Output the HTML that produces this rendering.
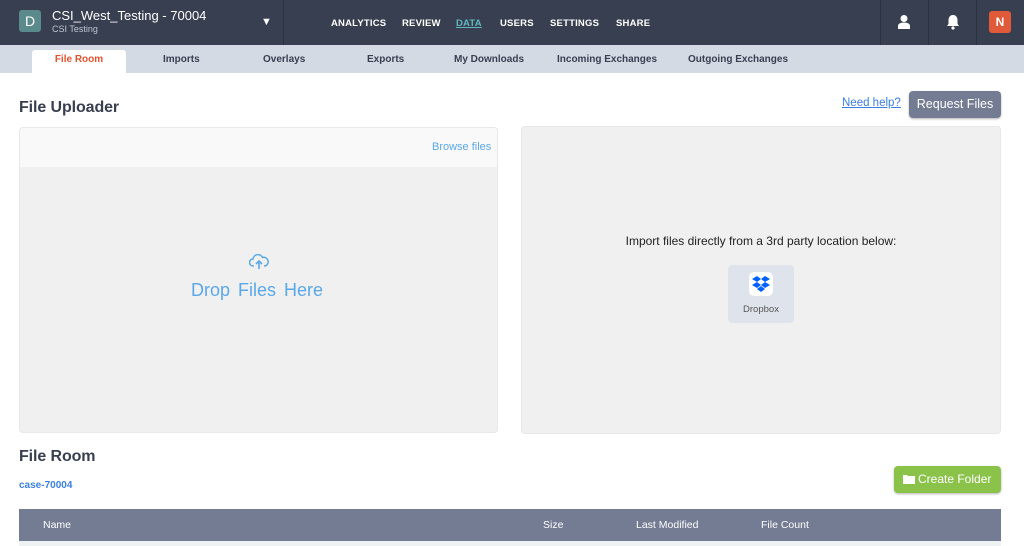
<!DOCTYPE html>
<html><head><meta charset="utf-8"><style>
*{margin:0;padding:0;box-sizing:border-box}
body{width:1024px;height:546px;overflow:hidden;background:#fff;font-family:"Liberation Sans",Arial,sans-serif;position:relative;color:#373f51}
.a{position:absolute}
.hdr{left:0;top:0;width:1024px;height:45px;background:#373f51}
.nav{font-size:9.5px;font-weight:bold;color:#fff;top:18px;letter-spacing:.2px}
.vd{top:0;width:1px;height:45px;background:#2a3140}
.tabs{left:0;top:45px;width:1024px;height:28px;background:#d3dae3}
.tab{top:54px;font-size:10px;font-weight:bold;color:#373f51;text-align:center}
</style></head><body>
<div class="a hdr"></div>
<div class="a" style="left:19px;top:10px;width:22px;height:22px;background:#5a8a8c;border-radius:3px;color:#fff;font-size:14px;text-align:center;line-height:22px">D</div>
<div class="a" style="left:52px;top:8px;color:#fff;font-size:13px">CSI_West_Testing - 70004</div>
<div class="a" style="left:52px;top:24px;color:#c0c6d0;font-size:9px">CSI Testing</div>
<div class="a" style="left:261px;top:16px;color:#fff;font-size:11px">▼</div>
<div class="a vd" style="left:283px"></div>
<div class="a nav" style="left:331px">ANALYTICS</div>
<div class="a nav" style="left:402px">REVIEW</div>
<div class="a nav" style="left:456px;color:#5fb8c0;text-decoration:underline">DATA</div>
<div class="a nav" style="left:500px">USERS</div>
<div class="a nav" style="left:550px">SETTINGS</div>
<div class="a nav" style="left:616px">SHARE</div>
<div class="a vd" style="left:880px"></div>
<div class="a vd" style="left:928px"></div>
<div class="a vd" style="left:976px"></div>
<svg class="a" style="left:897px;top:14px" width="14" height="15" viewBox="0 0 14 15"><circle cx="7" cy="4.5" r="3.5" fill="#fff"/><path d="M1 15v-3c0-2 2-3.5 6-3.5s6 1.5 6 3.5v3z" fill="#fff"/></svg>
<svg class="a" style="left:946px;top:14px" width="14" height="16" viewBox="0 0 14 16"><path d="M7 1c-3 0-4.5 2.5-4.5 5v4L1 12h12l-1.5-2V6C11.5 3.5 10 1 7 1z" fill="#fff"/><circle cx="7" cy="14" r="1.6" fill="#fff"/></svg>
<div class="a" style="left:989px;top:11px;width:22px;height:22px;background:#e05a3a;border-radius:3px;color:#fff;font-size:12px;font-weight:bold;text-align:center;line-height:22px">N</div>
<div class="a tabs"></div>
<div class="a" style="left:32px;top:50px;width:94px;height:23px;background:#fff;border-radius:3px 3px 0 0"></div>
<div class="a tab" style="left:32px;width:94px;color:#e0532f">File Room</div>
<div class="a tab" style="left:163px">Imports</div>
<div class="a tab" style="left:263px">Overlays</div>
<div class="a tab" style="left:367px">Exports</div>
<div class="a tab" style="left:454px">My Downloads</div>
<div class="a tab" style="left:557px">Incoming Exchanges</div>
<div class="a tab" style="left:688px">Outgoing Exchanges</div>
<div class="a" style="left:19px;top:99px;font-size:16px;font-weight:bold;letter-spacing:-.1px">File Uploader</div>
<div class="a" style="left:842px;top:97px;font-size:11.5px;color:#3b7fe0;text-decoration:underline">Need help?</div>
<div class="a" style="left:909px;top:91px;width:92px;height:27px;background:#737c93;border-radius:4px;color:#fff;font-size:12.5px;text-align:center;line-height:27px;box-shadow:0 1px 2px rgba(0,0,0,.3)">Request Files</div>
<div class="a" style="left:19px;top:127px;width:479px;height:306px;background:#f0f0f0;border:1px solid #e8e8e8;border-radius:4px;overflow:hidden"><div style="height:39px;background:#f9f9f9"></div></div>
<div class="a" style="left:432px;top:141px;font-size:11px;color:#5aa8ea">Browse files</div>
<svg class="a" style="left:249px;top:254px" width="20" height="16" viewBox="0 0 20 16"><path d="M5 12H4a3.5 3.5 0 010-7 5 5 0 019.5-1.5A4 4 0 0116 12h-1" fill="none" stroke="#5aa8ea" stroke-width="1.5"/><path d="M10 15V7M7 10l3-3 3 3" fill="none" stroke="#5aa8ea" stroke-width="1.6"/></svg>
<div class="a" style="left:191px;top:280px;font-size:18px;color:#5aa8ea;word-spacing:3px">Drop Files Here</div>
<div class="a" style="left:521px;top:126px;width:480px;height:308px;background:#f0f0f0;border:1px solid #e8e8e8;border-radius:4px"></div>
<div class="a" style="left:521px;top:234px;width:480px;text-align:center;font-size:12px;color:#222">Import files directly from a 3rd party location below:</div>
<div class="a" style="left:728px;top:265px;width:66px;height:58px;background:#dfe4ec;border-radius:4px"></div>
<div class="a" style="left:749px;top:272px;width:24px;height:24px;background:#fff;border-radius:5px"></div>
<svg class="a" style="left:752px;top:276px" width="18" height="16" viewBox="0 0 18 16"><g fill="#0061fe"><path d="M5 0L0 3l5 3 4-3z"/><path d="M13 0l5 3-5 3-4-3z"/><path d="M0 9l5-3 4 3-4 3z"/><path d="M18 9l-5-3-4 3 4 3z"/><path d="M5 13l4-3 4 3-4 3z"/></g></svg>
<div class="a" style="left:728px;top:304px;width:66px;text-align:center;font-size:9.5px;color:#555">Dropbox</div>
<div class="a" style="left:19px;top:448px;font-size:16px;font-weight:bold;letter-spacing:-.1px">File Room</div>
<div class="a" style="left:19px;top:480px;font-size:10px;font-weight:bold;color:#3b7fe0">case-70004</div>
<div class="a" style="left:894px;top:466px;width:107px;height:27px;background:#8bc34a;border-radius:4px;color:#fff;font-size:12px;line-height:27px;padding-left:24px;box-shadow:0 1px 2px rgba(0,0,0,.3)">Create Folder</div>
<svg class="a" style="left:903px;top:474px" width="12" height="10" viewBox="0 0 12 10"><path d="M0 1h4l1 1h7v8H0z" fill="#fff"/></svg>
<div class="a" style="left:19px;top:509px;width:982px;height:32px;background:#737c93"></div>
<div class="a" style="left:19px;top:541px;width:982px;height:5px;background:#eef2f3"></div>
<div class="a" style="left:43px;top:519px;font-size:10.5px;color:#fff">Name</div>
<div class="a" style="left:543px;top:519px;font-size:10.5px;color:#fff">Size</div>
<div class="a" style="left:636px;top:519px;font-size:10.5px;color:#fff">Last Modified</div>
<div class="a" style="left:761px;top:519px;font-size:10.5px;color:#fff">File Count</div>
</body></html>
